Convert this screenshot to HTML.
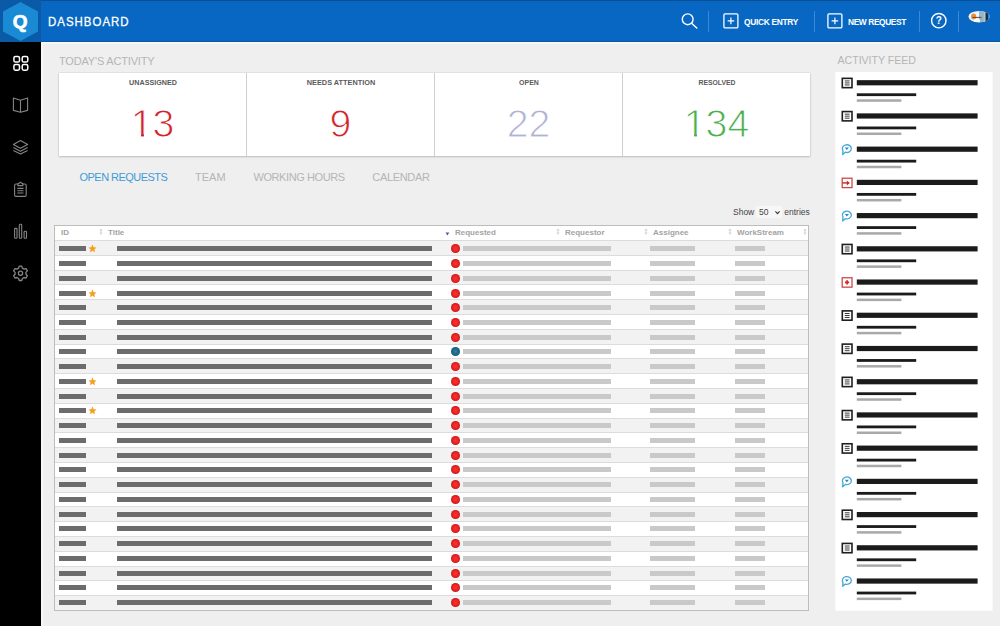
<!DOCTYPE html><html><head><meta charset="utf-8"><title>Dashboard</title><style>
*{box-sizing:border-box;margin:0;padding:0}
html,body{width:1000px;height:626px;overflow:hidden}
body{background:#efefef;font-family:"Liberation Sans",sans-serif;position:relative;color:#444}
.abs{position:absolute}
#hdr{left:0;top:0;width:1000px;height:42px;background:#0767c2;border-top:1px solid #0a4e93;border-bottom:1px solid #0959ab}
#lt1{left:41px;top:42px;width:959px;height:2px;background:linear-gradient(#f9fbfc,#f3f3f3)}
#lt2{left:41px;top:42px;width:1.5px;height:584px;background:#f6f6f6}
#logo{left:0;top:0;width:41px;height:42px;background:#0b5aa7}
#side{left:0;top:42px;width:41px;height:584px;background:#000}
#title{left:47.6px;top:15.3px;font-size:12.6px;line-height:15px;color:#fff;letter-spacing:1.1px;white-space:nowrap;transform:scaleX(.91);transform-origin:0 0;-webkit-text-stroke:.3px #fff}
.hbtn{color:#fff;font-weight:bold;font-size:8.4px;line-height:10px;white-space:nowrap;letter-spacing:-.3px}
.vdiv{width:1.2px;height:21px;top:10.5px;background:#3a89d6}
.sec{font-size:11px;line-height:13px;color:#b5b5b5;white-space:nowrap}
#cards{left:58.5px;top:72.5px;width:751px;height:83.5px;background:#fff;box-shadow:0 0 1px rgba(0,0,0,.25),0 1px 2px rgba(0,0,0,.18)}
.cdiv{top:72.5px;width:1px;height:83.5px;background:#cfcfcf}
.card{top:72px;height:84px;width:188px}
.card .lab{position:absolute;left:0;right:0;top:7.1px;text-align:center;font-size:8px;line-height:8px;font-weight:bold;color:#5a5a5a;transform-origin:50% 50%}
.one{position:relative;display:inline-block}
.one::before,.one::after{content:"";position:absolute;top:.81em;height:.14em;background:#fff}
.one::before{left:.05em;width:.203em}
.one::after{left:.337em;width:.2em}
.card .num{position:absolute;left:0;right:0;top:28.9px;text-align:center;font-size:39.3px;line-height:1.158em;-webkit-text-stroke:1px #fff}
.tab{top:171px;font-size:11px;line-height:13px;color:#b5b5b5;white-space:nowrap}
#tbl{left:54px;top:225px;width:755px;height:386px;background:#fff;border:1px solid #bdbdbd}
#hline{left:55px;top:240px;width:753px;height:1px;background:#dcdcdc}
.th{top:228px;font-size:8px;line-height:10px;color:#a3a3a3;white-space:nowrap;font-weight:bold}
.row{left:55px;width:753px;border-bottom:1px solid #dcdcdc}
.row.odd{background:#f3f3f3}
.b{position:absolute;height:5px;display:block}
.dk{background:#6c6c6c}
.lt{background:#c9c9c9}
.dot{position:absolute;display:block;width:8.6px;height:8.6px;border-radius:50%;background:radial-gradient(circle,#ff2e2e 0,#f52828 30%,#c81a1a 75%,#c81a1a 100%)}
#feed{left:835px;top:72px;width:158px;height:539px;background:#fff}
.fb1{position:absolute;left:857px;width:121px;height:5px;background:#1c1c1c}
.fb2{position:absolute;left:857px;width:59px;height:3px;background:#1c1c1c}
.fb3{position:absolute;left:857px;width:44px;height:2px;background:#ababab}
</style></head><body>
<div id="hdr" class="abs"></div><div id="lt1" class="abs"></div><div id="lt2" class="abs"></div>
<div id="logo" class="abs"><svg width="41" height="42" viewBox="0 0 41 42"><polygon points="20.5,2 38,11.5 38,31.5 20.5,41 3,31.5 3,11.5" fill="#1b8ad5"/><text x="20.2" y="28.2" text-anchor="middle" font-family="Liberation Sans, sans-serif" font-weight="bold" font-size="19" fill="#fff" stroke="#fff" stroke-width="0.7">Q</text></svg></div>
<div id="title" class="abs">DASHBOARD</div>
<svg class="abs" style="left:680px;top:12px" width="20" height="18" viewBox="0 0 20 18"><circle cx="7.7" cy="7.3" r="5.4" fill="none" stroke="#fff" stroke-width="1.4"/><path d="M11.6 11.3 L16.8 16" stroke="#fff" stroke-width="1.5" stroke-linecap="round"/></svg>
<div class="abs vdiv" style="left:708px"></div>
<svg class="abs" style="left:723px;top:13px" width="16" height="16" viewBox="0 0 16 16"><rect x="0.9" y="0.9" width="14" height="14" rx="1.2" fill="none" stroke="#fff" stroke-width="1.3"/><path d="M7.9 4.6v6.6M4.6 7.9h6.6" stroke="#fff" stroke-width="1.2"/></svg>
<div class="abs hbtn" style="left:744px;top:17px">QUICK ENTRY</div>
<div class="abs vdiv" style="left:814px"></div>
<svg class="abs" style="left:827px;top:13px" width="16" height="16" viewBox="0 0 16 16"><rect x="0.9" y="0.9" width="14" height="14" rx="1.2" fill="none" stroke="#fff" stroke-width="1.3"/><path d="M7.9 4.6v6.6M4.6 7.9h6.6" stroke="#fff" stroke-width="1.2"/></svg>
<div class="abs hbtn" style="left:848px;top:17px;letter-spacing:-.4px">NEW REQUEST</div>
<div class="abs vdiv" style="left:919px"></div>
<svg class="abs" style="left:930px;top:12px" width="18" height="18" viewBox="0 0 18 18"><circle cx="8.8" cy="8.7" r="7.2" fill="none" stroke="#fff" stroke-width="1.4"/><text x="8.8" y="12.4" text-anchor="middle" font-family="Liberation Sans, sans-serif" font-weight="bold" font-size="10" fill="#fff">?</text></svg>
<div class="abs vdiv" style="left:958px"></div>
<svg class="abs" style="left:968px;top:10px" width="23" height="14" viewBox="0 0 23 14"><defs><clipPath id="av"><ellipse cx="11.1" cy="6.6" rx="10.6" ry="5.7"/></clipPath></defs><g clip-path="url(#av)"><rect width="23" height="14" fill="#f1f3f5"/><ellipse cx="5.6" cy="6.6" rx="2.6" ry="3" fill="#e2923f"/><rect x="11" y="0" width="7" height="14" fill="#8fb8ca"/><rect x="15.8" y="0" width="1.5" height="14" fill="#c8c4ad"/><rect x="17.6" y="0" width="2.4" height="14" fill="#0f3158"/><rect x="20" y="0" width="3" height="14" fill="#2d7fd0"/><path d="M4.5 7.4 H13.5" stroke="#6e4426" stroke-width="1"/><rect x="6" y="9.5" width="6" height="4" fill="#fbfbfb"/></g></svg>
<div id="side" class="abs"></div>
<svg class="abs" style="left:13px;top:55px" width="16" height="16" viewBox="0 0 16 16" fill="none" stroke="#fff" stroke-width="1.5"><rect x="0.9" y="1.4" width="5.6" height="5.6" rx="1.6"/><rect x="9.2" y="1.4" width="5.6" height="5.6" rx="1.6"/><rect x="0.9" y="9.6" width="5.6" height="5.6" rx="1.6"/><rect x="9.2" y="9.6" width="5.6" height="5.6" rx="1.6"/></svg>
<svg class="abs" style="left:12px;top:97px" width="17" height="16" viewBox="0 0 17 16" fill="none" stroke="#858585" stroke-width="1.1" stroke-linejoin="round"><path d="M1.4 1 L8.5 3.2 L15.6 1 V13.4 L8.5 15.3 L1.4 13.4 Z"/><path d="M8.5 3.2V15.3"/></svg>
<svg class="abs" style="left:12px;top:139px" width="17" height="16" viewBox="0 0 17 16" fill="none" stroke="#858585" stroke-width="1.1" stroke-linejoin="round"><path d="M8.5 1.6 L15.6 5.4 L8.5 9.2 L1.4 5.4 Z"/><path d="M1.4 8.6 L8.5 12.3 L15.6 8.6"/><path d="M1.4 11.4 L8.5 15.1 L15.6 11.4"/></svg>
<svg class="abs" style="left:12px;top:181px" width="17" height="17" viewBox="0 0 17 17" fill="none" stroke="#858585" stroke-width="1.1" stroke-linejoin="round"><rect x="2.6" y="3" width="11.6" height="12.4" rx="1.4"/><path d="M5.9 4.6 V3 L8.4 1.3 L10.9 3 V4.6 Z" fill="#000"/><path d="M5.3 7.4h6.2M5.3 9.7h6.2M5.3 12h6.2"/></svg>
<svg class="abs" style="left:12px;top:223px" width="17" height="17" viewBox="0 0 17 17" fill="none" stroke="#858585" stroke-width="1.1"><rect x="2.6" y="5.4" width="2.4" height="9.8" rx="0.8"/><rect x="7.3" y="1.3" width="2.4" height="13.9" rx="0.8"/><rect x="12.1" y="8.2" width="2.4" height="7" rx="0.8"/></svg>
<svg class="abs" style="left:12px;top:265px" width="17" height="17" viewBox="0 0 17 17" fill="none" stroke="#858585" stroke-width="1.3" stroke-linejoin="round"><path d="M7.21 1.12 L9.79 1.12 L10.36 3.13 L12.05 4.10 L14.08 3.59 L15.37 5.83 L13.91 7.33 L13.91 9.27 L15.37 10.77 L14.08 13.01 L12.05 12.50 L10.36 13.47 L9.79 15.48 L7.21 15.48 L6.64 13.47 L4.95 12.50 L2.92 13.01 L1.63 10.77 L3.09 9.27 L3.09 7.33 L1.63 5.83 L2.92 3.59 L4.95 4.10 L6.64 3.13 Z"/><circle cx="8.5" cy="8.3" r="2.1"/></svg>
<div class="abs sec" style="left:59px;top:55px;letter-spacing:-.18px">TODAY'S ACTIVITY</div>
<div class="abs sec" style="left:837.5px;top:54px;font-size:10.6px;letter-spacing:-.02px">ACTIVITY FEED</div>
<div id="cards" class="abs"></div>
<div class="abs cdiv" style="left:246.3px"></div>
<div class="abs cdiv" style="left:434.3px"></div>
<div class="abs cdiv" style="left:622.3px"></div>
<div class="abs card" style="left:58.5px"><div class="lab" style="transform:scaleX(0.896)">UNASSIGNED</div><div class="num" style="color:#d0242a"><span class="one">1</span>3</div></div>
<div class="abs card" style="left:246.5px"><div class="lab" style="transform:scaleX(0.916)">NEEDS ATTENTION</div><div class="num" style="color:#d0242a">9</div></div>
<div class="abs card" style="left:434.5px"><div class="lab" style="transform:scaleX(0.873)">OPEN</div><div class="num" style="color:#b0b2d4">22</div></div>
<div class="abs card" style="left:622.5px"><div class="lab" style="transform:scaleX(0.852)">RESOLVED</div><div class="num" style="color:#4cae50"><span class="one">1</span>34</div></div>
<div class="abs tab" style="left:79.5px;letter-spacing:-0.53px;color:#3f9bd6">OPEN REQUESTS</div>
<div class="abs tab" style="left:195.0px;letter-spacing:0.00px">TEAM</div>
<div class="abs tab" style="left:253.5px;letter-spacing:-0.42px">WORKING HOURS</div>
<div class="abs tab" style="left:372.3px;letter-spacing:-0.33px">CALENDAR</div>
<div class="abs" style="left:733px;top:207.3px;font-size:8.5px;line-height:10px;color:#444;white-space:nowrap">Show</div>
<div class="abs" style="left:756px;top:206px;width:26px;height:12px;background:#f7f7f7"></div>
<div class="abs" style="left:759px;top:207.3px;font-size:8.5px;line-height:10px;color:#444">50</div>
<svg class="abs" style="left:774px;top:209.5px" width="7" height="6" viewBox="0 0 7 6"><path d="M1.4 1.4 L3.5 3.6 L5.6 1.4" fill="none" stroke="#333" stroke-width="1.1"/></svg>
<div class="abs" style="left:784.3px;top:207.3px;font-size:8.5px;line-height:10px;color:#444;white-space:nowrap">entries</div>
<div id="tbl" class="abs"></div><div id="hline" class="abs"></div>
<div class="abs th" style="left:61px">ID</div>
<div class="abs th" style="left:108px">Title</div>
<div class="abs th" style="left:455px">Requested</div>
<div class="abs th" style="left:565px">Requestor</div>
<div class="abs th" style="left:653px">Assignee</div>
<div class="abs th" style="left:737px">WorkStream</div>
<svg class="abs" style="left:99px;top:228.4px" width="4" height="8" viewBox="0 0 4 8"><path d="M2 0.2 L3.7 2.7 H2.5 V4.5 H3.7 L2 7 L0.3 4.5 H1.5 V2.7 H0.3Z" fill="#d8d8d8"/></svg>
<svg class="abs" style="left:556px;top:228.4px" width="4" height="8" viewBox="0 0 4 8"><path d="M2 0.2 L3.7 2.7 H2.5 V4.5 H3.7 L2 7 L0.3 4.5 H1.5 V2.7 H0.3Z" fill="#d8d8d8"/></svg>
<svg class="abs" style="left:644px;top:228.4px" width="4" height="8" viewBox="0 0 4 8"><path d="M2 0.2 L3.7 2.7 H2.5 V4.5 H3.7 L2 7 L0.3 4.5 H1.5 V2.7 H0.3Z" fill="#d8d8d8"/></svg>
<svg class="abs" style="left:728px;top:228.4px" width="4" height="8" viewBox="0 0 4 8"><path d="M2 0.2 L3.7 2.7 H2.5 V4.5 H3.7 L2 7 L0.3 4.5 H1.5 V2.7 H0.3Z" fill="#d8d8d8"/></svg>
<svg class="abs" style="left:803px;top:228.4px" width="4" height="8" viewBox="0 0 4 8"><path d="M2 0.2 L3.7 2.7 H2.5 V4.5 H3.7 L2 7 L0.3 4.5 H1.5 V2.7 H0.3Z" fill="#d8d8d8"/></svg>
<svg class="abs" style="left:445px;top:232px" width="5" height="4" viewBox="0 0 5 4"><path d="M0.5 0.4 H4.3 L2.4 3.6Z" fill="#5652b4"/></svg>
<div class="abs" style="left:55px;width:753px;top:241px;height:14px;background:#f2f2f2"></div>
<div class="abs" style="left:55px;width:753px;top:255px;height:1px;background:#dcdcdc"></div>
<i class="b dk" style="left:58.5px;top:246px;width:27.5px"></i>
<svg class="abs" style="left:88px;top:243.7px" width="9" height="9" viewBox="0 0 9 9"><path d="M4.5 0.6 L5.7 3.2 L8.5 3.5 L6.4 5.4 L7 8.2 L4.5 6.8 L2 8.2 L2.6 5.4 L0.5 3.5 L3.3 3.2Z" fill="#f2a11d"/></svg>
<i class="b dk" style="left:117.0px;top:246px;width:315.0px"></i>
<i class="dot" style="left:451.4px;top:244.0px"></i>
<i class="b lt" style="left:463.0px;top:246px;width:147.5px"></i>
<i class="b lt" style="left:650.0px;top:246px;width:45.0px"></i>
<i class="b lt" style="left:734.6px;top:246px;width:30.0px"></i>
<div class="abs" style="left:55px;width:753px;top:270px;height:1px;background:#dcdcdc"></div>
<i class="b dk" style="left:58.5px;top:261px;width:27.5px"></i>
<i class="b dk" style="left:117.0px;top:261px;width:315.0px"></i>
<i class="dot" style="left:451.4px;top:259.0px"></i>
<i class="b lt" style="left:463.0px;top:261px;width:147.5px"></i>
<i class="b lt" style="left:650.0px;top:261px;width:45.0px"></i>
<i class="b lt" style="left:734.6px;top:261px;width:30.0px"></i>
<div class="abs" style="left:55px;width:753px;top:271px;height:13px;background:#f2f2f2"></div>
<div class="abs" style="left:55px;width:753px;top:284px;height:1px;background:#dcdcdc"></div>
<i class="b dk" style="left:58.5px;top:276px;width:27.5px"></i>
<i class="b dk" style="left:117.0px;top:276px;width:315.0px"></i>
<i class="dot" style="left:451.4px;top:274.0px"></i>
<i class="b lt" style="left:463.0px;top:276px;width:147.5px"></i>
<i class="b lt" style="left:650.0px;top:276px;width:45.0px"></i>
<i class="b lt" style="left:734.6px;top:276px;width:30.0px"></i>
<div class="abs" style="left:55px;width:753px;top:299px;height:1px;background:#dcdcdc"></div>
<i class="b dk" style="left:58.5px;top:291px;width:27.5px"></i>
<svg class="abs" style="left:88px;top:288.7px" width="9" height="9" viewBox="0 0 9 9"><path d="M4.5 0.6 L5.7 3.2 L8.5 3.5 L6.4 5.4 L7 8.2 L4.5 6.8 L2 8.2 L2.6 5.4 L0.5 3.5 L3.3 3.2Z" fill="#f2a11d"/></svg>
<i class="b dk" style="left:117.0px;top:291px;width:315.0px"></i>
<i class="dot" style="left:451.4px;top:289.0px"></i>
<i class="b lt" style="left:463.0px;top:291px;width:147.5px"></i>
<i class="b lt" style="left:650.0px;top:291px;width:45.0px"></i>
<i class="b lt" style="left:734.6px;top:291px;width:30.0px"></i>
<div class="abs" style="left:55px;width:753px;top:300px;height:14px;background:#f2f2f2"></div>
<div class="abs" style="left:55px;width:753px;top:314px;height:1px;background:#dcdcdc"></div>
<i class="b dk" style="left:58.5px;top:305px;width:27.5px"></i>
<i class="b dk" style="left:117.0px;top:305px;width:315.0px"></i>
<i class="dot" style="left:451.4px;top:303.0px"></i>
<i class="b lt" style="left:463.0px;top:305px;width:147.5px"></i>
<i class="b lt" style="left:650.0px;top:305px;width:45.0px"></i>
<i class="b lt" style="left:734.6px;top:305px;width:30.0px"></i>
<div class="abs" style="left:55px;width:753px;top:329px;height:1px;background:#dcdcdc"></div>
<i class="b dk" style="left:58.5px;top:320px;width:27.5px"></i>
<i class="b dk" style="left:117.0px;top:320px;width:315.0px"></i>
<i class="dot" style="left:451.4px;top:318.0px"></i>
<i class="b lt" style="left:463.0px;top:320px;width:147.5px"></i>
<i class="b lt" style="left:650.0px;top:320px;width:45.0px"></i>
<i class="b lt" style="left:734.6px;top:320px;width:30.0px"></i>
<div class="abs" style="left:55px;width:753px;top:330px;height:14px;background:#f2f2f2"></div>
<div class="abs" style="left:55px;width:753px;top:344px;height:1px;background:#dcdcdc"></div>
<i class="b dk" style="left:58.5px;top:335px;width:27.5px"></i>
<i class="b dk" style="left:117.0px;top:335px;width:315.0px"></i>
<i class="dot" style="left:451.4px;top:333.0px"></i>
<i class="b lt" style="left:463.0px;top:335px;width:147.5px"></i>
<i class="b lt" style="left:650.0px;top:335px;width:45.0px"></i>
<i class="b lt" style="left:734.6px;top:335px;width:30.0px"></i>
<div class="abs" style="left:55px;width:753px;top:358px;height:1px;background:#dcdcdc"></div>
<i class="b dk" style="left:58.5px;top:349px;width:27.5px"></i>
<i class="b dk" style="left:117.0px;top:349px;width:315.0px"></i>
<i class="dot" style="left:451.4px;top:347.0px;background:radial-gradient(circle,#2a86a8 0,#1d6b8a 40%,#17566f 100%)"></i>
<i class="b lt" style="left:463.0px;top:349px;width:147.5px"></i>
<i class="b lt" style="left:650.0px;top:349px;width:45.0px"></i>
<i class="b lt" style="left:734.6px;top:349px;width:30.0px"></i>
<div class="abs" style="left:55px;width:753px;top:359px;height:14px;background:#f2f2f2"></div>
<div class="abs" style="left:55px;width:753px;top:373px;height:1px;background:#dcdcdc"></div>
<i class="b dk" style="left:58.5px;top:364px;width:27.5px"></i>
<i class="b dk" style="left:117.0px;top:364px;width:315.0px"></i>
<i class="dot" style="left:451.4px;top:362.0px"></i>
<i class="b lt" style="left:463.0px;top:364px;width:147.5px"></i>
<i class="b lt" style="left:650.0px;top:364px;width:45.0px"></i>
<i class="b lt" style="left:734.6px;top:364px;width:30.0px"></i>
<div class="abs" style="left:55px;width:753px;top:388px;height:1px;background:#dcdcdc"></div>
<i class="b dk" style="left:58.5px;top:379px;width:27.5px"></i>
<svg class="abs" style="left:88px;top:376.7px" width="9" height="9" viewBox="0 0 9 9"><path d="M4.5 0.6 L5.7 3.2 L8.5 3.5 L6.4 5.4 L7 8.2 L4.5 6.8 L2 8.2 L2.6 5.4 L0.5 3.5 L3.3 3.2Z" fill="#f2a11d"/></svg>
<i class="b dk" style="left:117.0px;top:379px;width:315.0px"></i>
<i class="dot" style="left:451.4px;top:377.0px"></i>
<i class="b lt" style="left:463.0px;top:379px;width:147.5px"></i>
<i class="b lt" style="left:650.0px;top:379px;width:45.0px"></i>
<i class="b lt" style="left:734.6px;top:379px;width:30.0px"></i>
<div class="abs" style="left:55px;width:753px;top:389px;height:14px;background:#f2f2f2"></div>
<div class="abs" style="left:55px;width:753px;top:403px;height:1px;background:#dcdcdc"></div>
<i class="b dk" style="left:58.5px;top:394px;width:27.5px"></i>
<i class="b dk" style="left:117.0px;top:394px;width:315.0px"></i>
<i class="dot" style="left:451.4px;top:392.0px"></i>
<i class="b lt" style="left:463.0px;top:394px;width:147.5px"></i>
<i class="b lt" style="left:650.0px;top:394px;width:45.0px"></i>
<i class="b lt" style="left:734.6px;top:394px;width:30.0px"></i>
<div class="abs" style="left:55px;width:753px;top:418px;height:1px;background:#dcdcdc"></div>
<i class="b dk" style="left:58.5px;top:408px;width:27.5px"></i>
<svg class="abs" style="left:88px;top:405.7px" width="9" height="9" viewBox="0 0 9 9"><path d="M4.5 0.6 L5.7 3.2 L8.5 3.5 L6.4 5.4 L7 8.2 L4.5 6.8 L2 8.2 L2.6 5.4 L0.5 3.5 L3.3 3.2Z" fill="#f2a11d"/></svg>
<i class="b dk" style="left:117.0px;top:408px;width:315.0px"></i>
<i class="dot" style="left:451.4px;top:406.0px"></i>
<i class="b lt" style="left:463.0px;top:408px;width:147.5px"></i>
<i class="b lt" style="left:650.0px;top:408px;width:45.0px"></i>
<i class="b lt" style="left:734.6px;top:408px;width:30.0px"></i>
<div class="abs" style="left:55px;width:753px;top:419px;height:13px;background:#f2f2f2"></div>
<div class="abs" style="left:55px;width:753px;top:432px;height:1px;background:#dcdcdc"></div>
<i class="b dk" style="left:58.5px;top:423px;width:27.5px"></i>
<i class="b dk" style="left:117.0px;top:423px;width:315.0px"></i>
<i class="dot" style="left:451.4px;top:421.0px"></i>
<i class="b lt" style="left:463.0px;top:423px;width:147.5px"></i>
<i class="b lt" style="left:650.0px;top:423px;width:45.0px"></i>
<i class="b lt" style="left:734.6px;top:423px;width:30.0px"></i>
<div class="abs" style="left:55px;width:753px;top:447px;height:1px;background:#dcdcdc"></div>
<i class="b dk" style="left:58.5px;top:438px;width:27.5px"></i>
<i class="b dk" style="left:117.0px;top:438px;width:315.0px"></i>
<i class="dot" style="left:451.4px;top:436.0px"></i>
<i class="b lt" style="left:463.0px;top:438px;width:147.5px"></i>
<i class="b lt" style="left:650.0px;top:438px;width:45.0px"></i>
<i class="b lt" style="left:734.6px;top:438px;width:30.0px"></i>
<div class="abs" style="left:55px;width:753px;top:448px;height:14px;background:#f2f2f2"></div>
<div class="abs" style="left:55px;width:753px;top:462px;height:1px;background:#dcdcdc"></div>
<i class="b dk" style="left:58.5px;top:453px;width:27.5px"></i>
<i class="b dk" style="left:117.0px;top:453px;width:315.0px"></i>
<i class="dot" style="left:451.4px;top:451.0px"></i>
<i class="b lt" style="left:463.0px;top:453px;width:147.5px"></i>
<i class="b lt" style="left:650.0px;top:453px;width:45.0px"></i>
<i class="b lt" style="left:734.6px;top:453px;width:30.0px"></i>
<div class="abs" style="left:55px;width:753px;top:477px;height:1px;background:#dcdcdc"></div>
<i class="b dk" style="left:58.5px;top:467px;width:27.5px"></i>
<i class="b dk" style="left:117.0px;top:467px;width:315.0px"></i>
<i class="dot" style="left:451.4px;top:465.0px"></i>
<i class="b lt" style="left:463.0px;top:467px;width:147.5px"></i>
<i class="b lt" style="left:650.0px;top:467px;width:45.0px"></i>
<i class="b lt" style="left:734.6px;top:467px;width:30.0px"></i>
<div class="abs" style="left:55px;width:753px;top:478px;height:14px;background:#f2f2f2"></div>
<div class="abs" style="left:55px;width:753px;top:492px;height:1px;background:#dcdcdc"></div>
<i class="b dk" style="left:58.5px;top:482px;width:27.5px"></i>
<i class="b dk" style="left:117.0px;top:482px;width:315.0px"></i>
<i class="dot" style="left:451.4px;top:480.0px"></i>
<i class="b lt" style="left:463.0px;top:482px;width:147.5px"></i>
<i class="b lt" style="left:650.0px;top:482px;width:45.0px"></i>
<i class="b lt" style="left:734.6px;top:482px;width:30.0px"></i>
<div class="abs" style="left:55px;width:753px;top:506px;height:1px;background:#dcdcdc"></div>
<i class="b dk" style="left:58.5px;top:497px;width:27.5px"></i>
<i class="b dk" style="left:117.0px;top:497px;width:315.0px"></i>
<i class="dot" style="left:451.4px;top:495.0px"></i>
<i class="b lt" style="left:463.0px;top:497px;width:147.5px"></i>
<i class="b lt" style="left:650.0px;top:497px;width:45.0px"></i>
<i class="b lt" style="left:734.6px;top:497px;width:30.0px"></i>
<div class="abs" style="left:55px;width:753px;top:507px;height:14px;background:#f2f2f2"></div>
<div class="abs" style="left:55px;width:753px;top:521px;height:1px;background:#dcdcdc"></div>
<i class="b dk" style="left:58.5px;top:512px;width:27.5px"></i>
<i class="b dk" style="left:117.0px;top:512px;width:315.0px"></i>
<i class="dot" style="left:451.4px;top:510.0px"></i>
<i class="b lt" style="left:463.0px;top:512px;width:147.5px"></i>
<i class="b lt" style="left:650.0px;top:512px;width:45.0px"></i>
<i class="b lt" style="left:734.6px;top:512px;width:30.0px"></i>
<div class="abs" style="left:55px;width:753px;top:536px;height:1px;background:#dcdcdc"></div>
<i class="b dk" style="left:58.5px;top:526px;width:27.5px"></i>
<i class="b dk" style="left:117.0px;top:526px;width:315.0px"></i>
<i class="dot" style="left:451.4px;top:524.0px"></i>
<i class="b lt" style="left:463.0px;top:526px;width:147.5px"></i>
<i class="b lt" style="left:650.0px;top:526px;width:45.0px"></i>
<i class="b lt" style="left:734.6px;top:526px;width:30.0px"></i>
<div class="abs" style="left:55px;width:753px;top:537px;height:14px;background:#f2f2f2"></div>
<div class="abs" style="left:55px;width:753px;top:551px;height:1px;background:#dcdcdc"></div>
<i class="b dk" style="left:58.5px;top:541px;width:27.5px"></i>
<i class="b dk" style="left:117.0px;top:541px;width:315.0px"></i>
<i class="dot" style="left:451.4px;top:539.0px"></i>
<i class="b lt" style="left:463.0px;top:541px;width:147.5px"></i>
<i class="b lt" style="left:650.0px;top:541px;width:45.0px"></i>
<i class="b lt" style="left:734.6px;top:541px;width:30.0px"></i>
<div class="abs" style="left:55px;width:753px;top:566px;height:1px;background:#dcdcdc"></div>
<i class="b dk" style="left:58.5px;top:556px;width:27.5px"></i>
<i class="b dk" style="left:117.0px;top:556px;width:315.0px"></i>
<i class="dot" style="left:451.4px;top:554.0px"></i>
<i class="b lt" style="left:463.0px;top:556px;width:147.5px"></i>
<i class="b lt" style="left:650.0px;top:556px;width:45.0px"></i>
<i class="b lt" style="left:734.6px;top:556px;width:30.0px"></i>
<div class="abs" style="left:55px;width:753px;top:567px;height:13px;background:#f2f2f2"></div>
<div class="abs" style="left:55px;width:753px;top:580px;height:1px;background:#dcdcdc"></div>
<i class="b dk" style="left:58.5px;top:571px;width:27.5px"></i>
<i class="b dk" style="left:117.0px;top:571px;width:315.0px"></i>
<i class="dot" style="left:451.4px;top:569.0px"></i>
<i class="b lt" style="left:463.0px;top:571px;width:147.5px"></i>
<i class="b lt" style="left:650.0px;top:571px;width:45.0px"></i>
<i class="b lt" style="left:734.6px;top:571px;width:30.0px"></i>
<div class="abs" style="left:55px;width:753px;top:595px;height:1px;background:#dcdcdc"></div>
<i class="b dk" style="left:58.5px;top:585px;width:27.5px"></i>
<i class="b dk" style="left:117.0px;top:585px;width:315.0px"></i>
<i class="dot" style="left:451.4px;top:583.0px"></i>
<i class="b lt" style="left:463.0px;top:585px;width:147.5px"></i>
<i class="b lt" style="left:650.0px;top:585px;width:45.0px"></i>
<i class="b lt" style="left:734.6px;top:585px;width:30.0px"></i>
<div class="abs" style="left:55px;width:753px;top:596px;height:14px;background:#f2f2f2"></div>
<i class="b dk" style="left:58.5px;top:600px;width:27.5px"></i>
<i class="b dk" style="left:117.0px;top:600px;width:315.0px"></i>
<i class="dot" style="left:451.4px;top:598.0px"></i>
<i class="b lt" style="left:463.0px;top:600px;width:147.5px"></i>
<i class="b lt" style="left:650.0px;top:600px;width:45.0px"></i>
<i class="b lt" style="left:734.6px;top:600px;width:30.0px"></i>
<svg class="abs" style="left:830px;top:70px" width="170" height="546" viewBox="830 70 170 546"><rect x="835.3" y="72" width="157.3" height="538.8" fill="#fff"/><rect x="842.3" y="78.35" width="9.7" height="9.3" fill="#fff" stroke="#1e1e1e" stroke-width="1.6"/><path d="M844.8 80.95h4.8M844.8 82.95h4.8M844.8 84.95h4.8" stroke="#3a3a3a" stroke-width="1"/><rect x="856.8" y="80.15" width="120.8" height="5.2" fill="#1b1b1b"/><rect x="856.8" y="93.30" width="59.4" height="2.8" fill="#1b1b1b"/><rect x="856.8" y="99.30" width="44.6" height="2.5" fill="#a9a9a9"/><rect x="842.3" y="111.57" width="9.7" height="9.3" fill="#fff" stroke="#1e1e1e" stroke-width="1.6"/><path d="M844.8 114.17h4.8M844.8 116.17h4.8M844.8 118.17h4.8" stroke="#3a3a3a" stroke-width="1"/><rect x="856.8" y="113.37" width="120.8" height="5.2" fill="#1b1b1b"/><rect x="856.8" y="126.52" width="59.4" height="2.8" fill="#1b1b1b"/><rect x="856.8" y="132.52" width="44.6" height="2.5" fill="#a9a9a9"/><g transform="translate(841 144.49)"><path d="M4.31 7.72 L1.7 10 L1.95 6.03 A4.5 3.85 0 1 1 4.31 7.72 Z" fill="#fff" stroke="#45aadd" stroke-width="1.35" stroke-linejoin="round"/><path d="M3.8 3.1 H7.9 L5.85 5.5Z" fill="#3b82ad"/></g><rect x="856.8" y="146.59" width="120.8" height="5.2" fill="#1b1b1b"/><rect x="856.8" y="159.74" width="59.4" height="2.8" fill="#1b1b1b"/><rect x="856.8" y="165.74" width="44.6" height="2.5" fill="#a9a9a9"/><rect x="842.2" y="178.21" width="9.8" height="9.4" fill="#fff" stroke="#d04848" stroke-width="1.3"/><path d="M842.4 182.91h5.4" stroke="#c42a2a" stroke-width="1.4"/><path d="M846.8 180.41 L849.8 182.91 L846.8 185.41Z" fill="#c42a2a"/><rect x="856.8" y="179.81" width="120.8" height="5.2" fill="#1b1b1b"/><rect x="856.8" y="192.96" width="59.4" height="2.8" fill="#1b1b1b"/><rect x="856.8" y="198.96" width="44.6" height="2.5" fill="#a9a9a9"/><g transform="translate(841 210.93)"><path d="M4.31 7.72 L1.7 10 L1.95 6.03 A4.5 3.85 0 1 1 4.31 7.72 Z" fill="#fff" stroke="#45aadd" stroke-width="1.35" stroke-linejoin="round"/><path d="M3.8 3.1 H7.9 L5.85 5.5Z" fill="#3b82ad"/></g><rect x="856.8" y="213.03" width="120.8" height="5.2" fill="#1b1b1b"/><rect x="856.8" y="226.18" width="59.4" height="2.8" fill="#1b1b1b"/><rect x="856.8" y="232.18" width="44.6" height="2.5" fill="#a9a9a9"/><rect x="842.3" y="244.45" width="9.7" height="9.3" fill="#fff" stroke="#1e1e1e" stroke-width="1.6"/><path d="M844.8 247.05h4.8M844.8 249.05h4.8M844.8 251.05h4.8" stroke="#3a3a3a" stroke-width="1"/><rect x="856.8" y="246.25" width="120.8" height="5.2" fill="#1b1b1b"/><rect x="856.8" y="259.40" width="59.4" height="2.8" fill="#1b1b1b"/><rect x="856.8" y="265.40" width="44.6" height="2.5" fill="#a9a9a9"/><rect x="842.2" y="277.77" width="9.8" height="9.4" fill="#fff" stroke="#d04848" stroke-width="1.3"/><path d="M847.1 280.37v4.2M845 282.47h4.2" stroke="#d42626" stroke-width="1.7"/><rect x="856.8" y="279.47" width="120.8" height="5.2" fill="#1b1b1b"/><rect x="856.8" y="292.62" width="59.4" height="2.8" fill="#1b1b1b"/><rect x="856.8" y="298.62" width="44.6" height="2.5" fill="#a9a9a9"/><rect x="842.3" y="310.89" width="9.7" height="9.3" fill="#fff" stroke="#1e1e1e" stroke-width="1.6"/><path d="M844.8 313.49h4.8M844.8 315.49h4.8M844.8 317.49h4.8" stroke="#3a3a3a" stroke-width="1"/><rect x="856.8" y="312.69" width="120.8" height="5.2" fill="#1b1b1b"/><rect x="856.8" y="325.84" width="59.4" height="2.8" fill="#1b1b1b"/><rect x="856.8" y="331.84" width="44.6" height="2.5" fill="#a9a9a9"/><rect x="842.3" y="344.11" width="9.7" height="9.3" fill="#fff" stroke="#1e1e1e" stroke-width="1.6"/><path d="M844.8 346.71h4.8M844.8 348.71h4.8M844.8 350.71h4.8" stroke="#3a3a3a" stroke-width="1"/><rect x="856.8" y="345.91" width="120.8" height="5.2" fill="#1b1b1b"/><rect x="856.8" y="359.06" width="59.4" height="2.8" fill="#1b1b1b"/><rect x="856.8" y="365.06" width="44.6" height="2.5" fill="#a9a9a9"/><rect x="842.3" y="377.33" width="9.7" height="9.3" fill="#fff" stroke="#1e1e1e" stroke-width="1.6"/><path d="M844.8 379.93h4.8M844.8 381.93h4.8M844.8 383.93h4.8" stroke="#3a3a3a" stroke-width="1"/><rect x="856.8" y="379.13" width="120.8" height="5.2" fill="#1b1b1b"/><rect x="856.8" y="392.28" width="59.4" height="2.8" fill="#1b1b1b"/><rect x="856.8" y="398.28" width="44.6" height="2.5" fill="#a9a9a9"/><rect x="842.3" y="410.55" width="9.7" height="9.3" fill="#fff" stroke="#1e1e1e" stroke-width="1.6"/><path d="M844.8 413.15h4.8M844.8 415.15h4.8M844.8 417.15h4.8" stroke="#3a3a3a" stroke-width="1"/><rect x="856.8" y="412.35" width="120.8" height="5.2" fill="#1b1b1b"/><rect x="856.8" y="425.50" width="59.4" height="2.8" fill="#1b1b1b"/><rect x="856.8" y="431.50" width="44.6" height="2.5" fill="#a9a9a9"/><rect x="842.3" y="443.77" width="9.7" height="9.3" fill="#fff" stroke="#1e1e1e" stroke-width="1.6"/><path d="M844.8 446.37h4.8M844.8 448.37h4.8M844.8 450.37h4.8" stroke="#3a3a3a" stroke-width="1"/><rect x="856.8" y="445.57" width="120.8" height="5.2" fill="#1b1b1b"/><rect x="856.8" y="458.72" width="59.4" height="2.8" fill="#1b1b1b"/><rect x="856.8" y="464.72" width="44.6" height="2.5" fill="#a9a9a9"/><g transform="translate(841 476.69)"><path d="M4.31 7.72 L1.7 10 L1.95 6.03 A4.5 3.85 0 1 1 4.31 7.72 Z" fill="#fff" stroke="#45aadd" stroke-width="1.35" stroke-linejoin="round"/><path d="M3.8 3.1 H7.9 L5.85 5.5Z" fill="#3b82ad"/></g><rect x="856.8" y="478.79" width="120.8" height="5.2" fill="#1b1b1b"/><rect x="856.8" y="491.94" width="59.4" height="2.8" fill="#1b1b1b"/><rect x="856.8" y="497.94" width="44.6" height="2.5" fill="#a9a9a9"/><rect x="842.3" y="510.21" width="9.7" height="9.3" fill="#fff" stroke="#1e1e1e" stroke-width="1.6"/><path d="M844.8 512.81h4.8M844.8 514.81h4.8M844.8 516.81h4.8" stroke="#3a3a3a" stroke-width="1"/><rect x="856.8" y="512.01" width="120.8" height="5.2" fill="#1b1b1b"/><rect x="856.8" y="525.16" width="59.4" height="2.8" fill="#1b1b1b"/><rect x="856.8" y="531.16" width="44.6" height="2.5" fill="#a9a9a9"/><rect x="842.3" y="543.43" width="9.7" height="9.3" fill="#fff" stroke="#1e1e1e" stroke-width="1.6"/><path d="M844.8 546.03h4.8M844.8 548.03h4.8M844.8 550.03h4.8" stroke="#3a3a3a" stroke-width="1"/><rect x="856.8" y="545.23" width="120.8" height="5.2" fill="#1b1b1b"/><rect x="856.8" y="558.38" width="59.4" height="2.8" fill="#1b1b1b"/><rect x="856.8" y="564.38" width="44.6" height="2.5" fill="#a9a9a9"/><g transform="translate(841 576.35)"><path d="M4.31 7.72 L1.7 10 L1.95 6.03 A4.5 3.85 0 1 1 4.31 7.72 Z" fill="#fff" stroke="#45aadd" stroke-width="1.35" stroke-linejoin="round"/><path d="M3.8 3.1 H7.9 L5.85 5.5Z" fill="#3b82ad"/></g><rect x="856.8" y="578.45" width="120.8" height="5.2" fill="#1b1b1b"/><rect x="856.8" y="591.60" width="59.4" height="2.8" fill="#1b1b1b"/><rect x="856.8" y="597.60" width="44.6" height="2.5" fill="#a9a9a9"/></svg>
</body></html>
